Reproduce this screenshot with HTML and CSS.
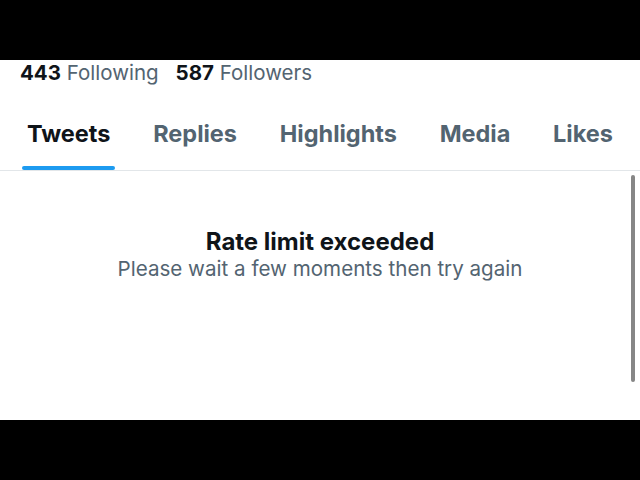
FILE: index.html
```html
<!DOCTYPE html>
<html>
<head>
<meta charset="utf-8">
<link rel="stylesheet" href="styles.css">
</head>
<body>
<div class="bar"></div>
<div class="screen">
  <div class="stats">
    <span class="stat"><b>443</b> Following</span>
    <span class="stat"><b>587</b> Followers</span>
  </div>
  <nav class="tabs">
    <div class="tab active"><span class="label">Tweets</span><span class="line"></span></div>
    <div class="tab"><span class="label">Replies</span></div>
    <div class="tab"><span class="label">Highlights</span></div>
    <div class="tab"><span class="label">Media</span></div>
    <div class="tab"><span class="label">Likes</span></div>
  </nav>
  <div class="message">
    <div class="title">Rate limit exceeded</div>
    <div class="sub">Please wait a few moments then try again</div>
  </div>
  <div class="scroll"></div>
</div>
<div class="bar"></div>
</body>
</html>
```
FILE: styles.css
```css
html, body { margin: 0; padding: 0; background: #000; }
body { font-family: Inter, "Open Sans", sans-serif; color: #0f1419; width: 640px; height: 480px; overflow: hidden; }
.bar { height: 60px; background: #000; }
.screen { position: relative; height: 360px; background: #fff; overflow: hidden; }
.stats { display: flex; gap: 17px; padding-left: 20px; height: 24px; align-items: center; font-size: 20.5px; color: #536471; }
.stats b { color: #0f1419; font-weight: 700; }
.tabs { display: flex; height: 86px; border-bottom: 1px solid #e2e6e9; padding-left: 22px; justify-content: space-between; padding-right: 22px; }
.tab { display: flex; flex-direction: column; align-items: center; padding-top: 36px; font-size: 23.5px; font-weight: 700; color: #536471; }
.tab .label { line-height: 28px; padding: 0 5px; }
.tab.active { color: #0f1419; }
.tab .line { display: block; margin-top: 18px; height: 4px; width: 100%; background: #1d9bf0; border-radius: 2px; }
.message { text-align: center; padding-top: 56px; }
.title { font-size: 24px; font-weight: 700; line-height: 29px; }
.sub { font-size: 20.6px; color: #536471; line-height: 26px; }
.scroll { position: absolute; right: 5px; top: 115px; width: 4px; height: 207px; background: #868686; border-radius: 2px; }
```
